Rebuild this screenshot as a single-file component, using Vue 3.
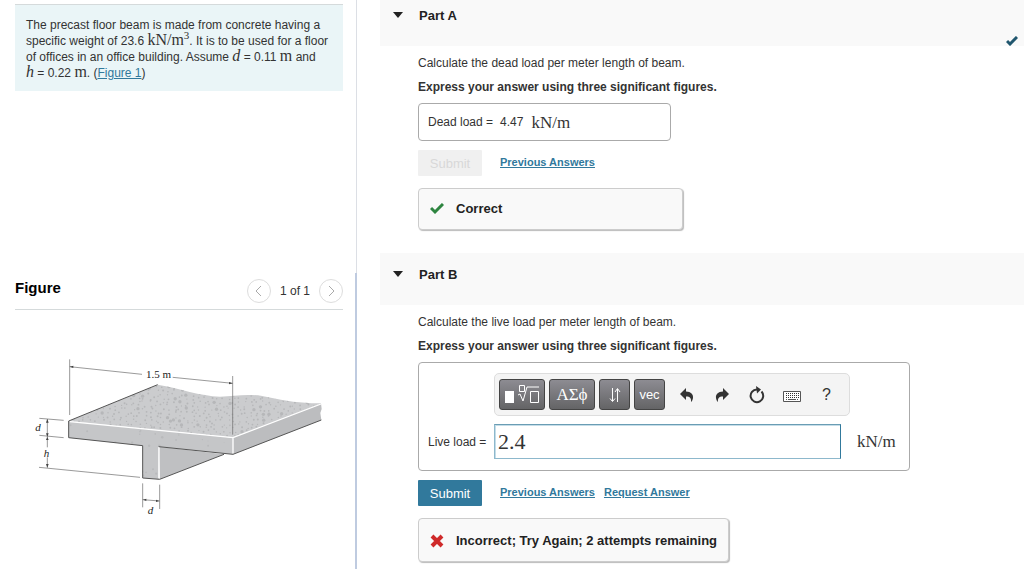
<script setup>
import { ref } from 'vue'

const liveLoad = ref('2.4')

// Pseudo-random aggregate specks on the top face of the slab
const specks = []
let seed = 7
const rand = () => {
  seed = (seed * 16807) % 2147483647
  return seed / 2147483647
}
for (let row = 0; row < 14; row++) {
  for (let col = 0; col < 42; col++) {
    specks.push({
      x: 150 + col * 18 + rand() * 14,
      y: 138 + row * 11 + rand() * 9,
      r: rand() > 0.9 ? 5 : 2 + rand()
    })
  }
}
const faceSpecks = []
for (let i = 0; i < 70; i++) {
  faceSpecks.push({ x: 150 + rand() * 480, y: 250 + rand() * 160, r: 1 + rand() * 3 })
}
const keys = []
for (let row = 0; row < 3; row++) {
  for (let col = 0; col < 7; col++) keys.push({ x: 3 + col * 2, y: 3 + row * 2 })
}
</script>

<template>
  <div class="page">
    <aside class="side">
      <div class="top">
        <p class="problem">
          The precast floor beam is made from concrete having a specific weight of 23.6
          <span class="math">kN/m<sup>3</sup></span>. It is to be used for a floor of offices in an
          office building. Assume <i class="math">d</i> = 0.11 <span class="math">m</span> and<br />
          <i class="math">h</i> = 0.22 <span class="math">m</span>. (<a href="#figure">Figure 1</a>)
        </p>
      </div>
      <section id="figure" class="figure">
        <header class="figure-head">
          <h2>Figure</h2>
          <nav class="pager">
            <button type="button" aria-label="Previous figure">
              <svg width="10" height="14" viewBox="0 0 10 14"><path d="M7 2 2 7l5 5" /></svg>
            </button>
            <span>1 of 1</span>
            <button type="button" aria-label="Next figure">
              <svg width="10" height="14" viewBox="0 0 10 14"><path d="m3 2 5 5-5 5" /></svg>
            </button>
          </nav>
        </header>
        <svg class="beam" viewBox="0 0 960 540" role="img" aria-label="Precast floor beam">
          <defs>
            <clipPath id="top-face">
              <path d="M146 243 413 134C480 145 540 168 600 170C650 168 690 158 745 172C800 184 850 191 903 190L639 293Z" />
            </clipPath>
            <clipPath id="front-face">
              <path d="M146 243 639 293V343L416 320V418L368 414V317L146 293Z" />
            </clipPath>
          </defs>
          <path fill="#bfc0c2" d="M416 320 612 343 419 418Z" />
          <path fill="#cbccce" d="M146 243 413 134C480 145 540 168 600 170C650 168 690 158 745 172C800 184 850 191 903 190L639 293Z" />
          <g clip-path="url(#top-face)" fill="#b6b7b9">
            <circle v-for="(s, i) in specks" :key="i" :cx="s.x" :cy="s.y" :r="s.r" />
          </g>
          <path fill="#c5c6c8" d="M146 243 639 293V343L416 320V418L368 414V317L146 293Z" />
          <g clip-path="url(#front-face)" fill="#b9babc">
            <circle v-for="(s, i) in faceSpecks" :key="i" :cx="s.x" :cy="s.y" :r="s.r" />
          </g>
          <path fill="#bcbdbf" d="M639 293 903 190 905 207 901 219 904 240 639 343Z" />
          <g fill="none" stroke="#fff" stroke-width="4">
            <path d="M149 245 639 293 903 192M639 293V341M417 321V414" />
          </g>
          <g fill="none" stroke="#555" stroke-width="3">
            <path d="M413 134 146 243V293L368 317V414L419 418 612 343M416 320 639 343 904 240" />
          </g>
          <g fill="none" stroke="#666" stroke-width="2">
            <path d="M149 58V225M638 108V284M149 80 366 103M458 112 638 130" />
            <path d="M58 235 131 241M58 286 131 293M82 237V322M82 352V383M57 382 360 412" />
            <path d="M368 430V502M419 434V507M368 479 419 483" />
          </g>
          <g fill="#444">
            <path d="m149 80 11-3v7zM638 130l-11-4v7zM82 237l-4 11h8zM82 290l-4-10h8zM82 291l-4 9h8zM82 383l-4-11h8zM369 479l10-3v7zM418 483l-10-4v7z" />
          </g>
          <g class="dims">
            <text x="378" y="115">1.5 m</text>
            <text class="var" x="46" y="273">d</text>
            <text class="var" x="71" y="350">h</text>
            <text class="var" x="383" y="522">d</text>
          </g>
        </svg>
      </section>
    </aside>

    <main class="parts">
      <section class="part">
        <header class="part-head first">
          <button type="button" class="toggle" aria-label="Collapse Part A"></button>
          <h2>Part A</h2>
          <svg class="done" width="12" height="10" viewBox="0 0 12 10"><path fill="none" stroke="#20566e" stroke-width="3" d="m1 5 3 3 7-7" /></svg>
        </header>
        <div class="body">
          <p>Calculate the dead load per meter length of beam.</p>
          <p class="strong">Express your answer using three significant figures.</p>
          <div class="answer done-answer">
            <span>Dead load =</span><span class="value">4.47</span><span class="math">kN/m</span>
          </div>
          <div class="actions">
            <button type="button" class="submit" disabled>Submit</button>
            <a href="#previous-a">Previous Answers</a>
          </div>
          <div class="feedback right">
            <svg width="14" height="12" viewBox="0 0 14 12"><path fill="none" stroke="#2e8540" stroke-width="3" d="m1 5 4 4 8-8" /></svg>
            <span>Correct</span>
          </div>
        </div>
      </section>

      <section class="part">
        <header class="part-head">
          <button type="button" class="toggle" aria-label="Collapse Part B"></button>
          <h2>Part B</h2>
        </header>
        <div class="body">
          <p>Calculate the live load per meter length of beam.</p>
          <p class="strong">Express your answer using three significant figures.</p>
          <div class="answer editor">
            <div class="toolbar">
              <button type="button" class="key wide" aria-label="Templates">
                <svg width="36" height="22" viewBox="0 0 36 22" fill="none" stroke="#fff">
                  <path fill="#fff" stroke="none" d="M1 7h9v12H1z" />
                  <path d="M15.500 1.500h5v6h-5zM26.500 7.500h8v11h-8z" />
                  <path d="m14 11 2-1 3 7 4-14h12" />
                </svg>
              </button>
              <button type="button" class="key wide greek">ΑΣϕ</button>
              <button type="button" class="key" aria-label="Scripts">
                <svg width="14" height="16" viewBox="0 0 14 16" fill="none" stroke="#fff"><path d="M4.500 1v13M2 11.500l2.500 3L7 11.500M9.500 15V2M7 5l2.500-3.500L12 5" /></svg>
              </button>
              <button type="button" class="key">vec</button>
              <div class="tools">
                <button type="button" aria-label="Undo">
                  <svg width="14" height="14" viewBox="0 0 14 14"><path d="M0 6 6 0v3.500c5 .2 7.500 3 7 6.500-.2 1.500-.8 3-2 4 .5-3.500-.8-5.500-5-5.500V12Z" /></svg>
                </button>
                <button type="button" aria-label="Redo">
                  <svg width="14" height="14" viewBox="0 0 14 14"><path d="M14 6 8 0v3.500C3 3.700.5 6.500 1 10c.2 1.500.8 3 2 4-.5-3.500.8-5.500 5-5.500V12Z" /></svg>
                </button>
                <button type="button" aria-label="Reset">
                  <svg width="18" height="18" viewBox="0 0 18 18"><path fill="none" stroke="#333" stroke-width="2" d="M13.500 5.500A6.300 6.300 0 1 1 9 3.500" /><path d="m8 0 5 3.500L9 7.500Z" /></svg>
                </button>
                <button type="button" aria-label="Keyboard">
                  <svg class="keyboard" width="18" height="12" viewBox="0 0 18 12"><path fill="#fff" stroke="#555" d="M.5.500h17v10H.5z" /><rect v-for="(k, i) in keys" :key="i" :x="k.x" :y="k.y - 1" width="1" height="1" fill="#333" /><path fill="#555" d="M3 8h1v1H3zM5 8h8v1H5zM14 8h1v1h-1z" /></svg>
                </button>
                <button type="button" class="help" aria-label="Help">?</button>
              </div>
            </div>
            <label for="live-load">Live load =</label>
            <input id="live-load" v-model="liveLoad" type="text" />
            <span class="math unit">kN/m</span>
          </div>
          <div class="actions">
            <button type="button" class="submit">Submit</button>
            <a href="#previous-b">Previous Answers</a>
            <a href="#request-b">Request Answer</a>
          </div>
          <div class="feedback wrong">
            <svg width="14" height="14" viewBox="0 0 14 14"><path fill="none" stroke="#cf2a2a" stroke-width="4" d="m2 2 10 10M12 2 2 12" /></svg>
            <span>Incorrect; Try Again; 2 attempts remaining</span>
          </div>
        </div>
      </section>
    </main>
  </div>
</template>

<style>
body {
  margin: 0;
  background: #fff;
}
</style>

<style scoped>
.page {
  display: grid;
  grid-template-columns: 357px minmax(0, 1fr);
  min-height: 100vh;
  font-family: "Liberation Sans", Arial, sans-serif;
  font-size: 12px;
  line-height: 16px;
  color: #333;
}
* {
  box-sizing: border-box;
}
p,
h2 {
  margin: 0;
}
button {
  padding: 0;
  border: 0;
  font-family: inherit;
}
.math {
  font-family: "Liberation Serif", serif;
  font-size: 17px;
  line-height: 1;
}
.problem .math {
  font-size: 16px;
  line-height: 0;
}
.math sup {
  font-size: 11px;
  line-height: 0;
}
a {
  color: #31799c;
}
.side {
  display: flex;
  flex-direction: column;
}
.top {
  height: 273px;
  padding: 4px 13px 0 15px;
  border-right: 1px solid #dcdfe5;
}
.problem {
  padding: 12px 11px 10px;
  border-top: 1px solid #d5dadb;
  background: #eaf5f7;
}
.figure {
  flex: 1;
  padding: 0 12px 0 15px;
  border-right: 2px solid #bfcbe0;
}
.figure-head {
  display: flex;
  align-items: center;
  justify-content: space-between;
  height: 37px;
  border-bottom: 1px solid #d5dadb;
}
.figure-head h2 {
  padding-bottom: 6px;
  font-size: 15px;
  color: #000;
}
.pager {
  display: flex;
  align-items: center;
  gap: 9px;
}
.pager button {
  display: flex;
  align-items: center;
  justify-content: center;
  width: 24px;
  height: 24px;
  border: 1px solid #ddd;
  border-radius: 50%;
  background: #fff;
}
.pager path {
  fill: none;
  stroke: #aaa;
}
.beam {
  display: block;
  width: 320px;
  margin: 30px 0 0 5px;
}
.dims {
  font-family: "Liberation Serif", serif;
  font-size: 33px;
  fill: #222;
}
.var {
  font-style: italic;
}
.parts {
  padding-left: 23px;
}
.part-head {
  display: flex;
  gap: 16px;
  height: 52px;
  padding: 14px 6px 0 13px;
  background: #f9f9f9;
}
.part-head.first {
  height: 46px;
  padding-top: 8px;
}
.part-head h2 {
  font-size: 13px;
  color: #222;
}
.toggle {
  width: 10px;
  height: 6px;
  margin-top: 4px;
  background: #222;
  clip-path: polygon(0 0, 100% 0, 50% 100%);
}
.done {
  align-self: flex-end;
  margin-left: auto;
}
.body {
  padding: 9px 16px 0 38px;
}
.body p {
  margin-bottom: 8px;
}
.strong {
  font-weight: bold;
}
.answer {
  border: 1px solid #aaa;
  border-radius: 4px;
}
.done-answer {
  display: flex;
  align-items: center;
  width: 253px;
  height: 38px;
  padding-left: 9px;
}
.value {
  margin: 0 8px 0 7px;
}
.actions {
  display: flex;
  align-items: center;
  gap: 9px;
  margin: 9px 0 12px;
}
.actions a {
  padding-bottom: 2px;
  font-size: 11px;
  font-weight: bold;
}
.submit {
  width: 64px;
  height: 26px;
  margin-right: 9px;
  border-radius: 1px;
  background: #31799c;
  color: #fff;
  font-size: 13px;
}
.submit:disabled {
  background: #f0f0f0;
  color: #d8d8d8;
}
.feedback {
  display: flex;
  align-items: center;
  gap: 12px;
  width: 265px;
  height: 42px;
  padding-left: 11px;
  border: 1px solid #ccc;
  border-radius: 4px;
  background: #f9f9f9;
  box-shadow: 1px 1px 1px #bbb;
  color: #222;
  font-size: 13px;
  font-weight: bold;
}
.right {
  margin-bottom: 23px;
}
.wrong {
  width: 311px;
  height: 44px;
  padding-top: 2px;
}
.editor {
  display: grid;
  grid-template-columns: 66px 347px auto;
  row-gap: 8px;
  align-items: center;
  width: 492px;
  height: 109px;
  padding: 10px 0 10px 9px;
  align-content: start;
}
.toolbar {
  grid-column: 2 / 4;
  display: flex;
  align-items: center;
  gap: 4px;
  width: 356px;
  height: 43px;
  padding-left: 4px;
  border: 1px solid #ddd;
  border-radius: 5px;
  background: #f4f4f4;
}
.key {
  display: flex;
  align-items: center;
  justify-content: center;
  width: 31px;
  height: 31px;
  border: 1px solid #444;
  border-radius: 3px;
  background: linear-gradient(#8d8c92, #646466);
  color: #fff;
  font-size: 13px;
}
.key.wide {
  width: 46px;
}
.greek {
  font-family: "Liberation Serif", serif;
  font-size: 17px;
}
.tools {
  display: flex;
}
.tools button {
  display: flex;
  align-items: center;
  justify-content: center;
  width: 35px;
  height: 31px;
  background: none;
  color: #333;
  fill: #333;
}
.keyboard {
  margin-top: 4px;
}
.tools .help {
  font-size: 16px;
}
input {
  width: 100%;
  height: 35px;
  padding: 0 3px;
  border: 1px solid #31799c;
  border-color: #6a9db4 #31799c #8db8cc #8db8cc;
  box-shadow: inset 1px 1px #c5dde8;
  font-family: "Liberation Serif", serif;
  font-size: 22px;
  color: #333;
  outline: 0;
}
.unit {
  padding-left: 16px;
}
</style>
